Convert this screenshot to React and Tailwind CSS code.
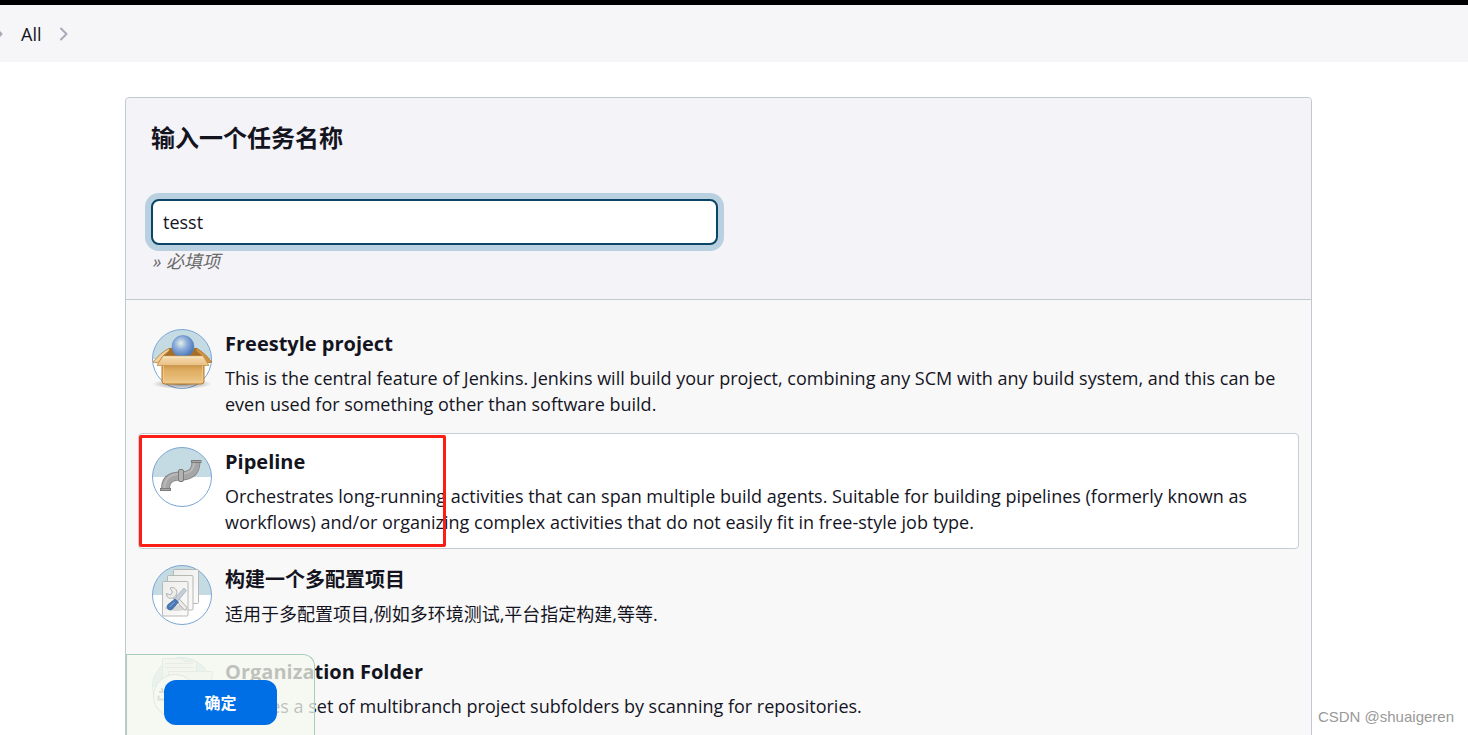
import React, { useState } from 'react';

function BoxIcon() {
  return (
    <svg viewBox="0 0 62 62" className="size-[62px] overflow-visible" aria-hidden="true">
      <defs>
        <radialGradient id="ball" cx="0.4" cy="0.35" r="0.7">
          <stop offset="0" stopColor="#e9f0e4" />
          <stop offset="0.4" stopColor="#8fb0de" />
          <stop offset="1" stopColor="#3f6cb0" />
        </radialGradient>
        <linearGradient id="carton" x1="0" y1="0" x2="0" y2="1">
          <stop offset="0" stopColor="#c08a3c" />
          <stop offset="0.35" stopColor="#dfad62" />
          <stop offset="1" stopColor="#edc88a" />
        </linearGradient>
        <linearGradient id="flap" x1="0" y1="0" x2="0" y2="1">
          <stop offset="0" stopColor="#f6ddb2" />
          <stop offset="1" stopColor="#e9bf82" />
        </linearGradient>
        <radialGradient id="boxShadow">
          <stop offset="0" stopColor="#000" stopOpacity="0.5" />
          <stop offset="1" stopColor="#000" stopOpacity="0" />
        </radialGradient>
      </defs>
      <circle cx="31" cy="31" r="29.5" fill="#fff" />
      <path d="M1.5 31a29.5 29.5 0 0 1 59 0z" fill="#c5dbe4" />
      <circle cx="31" cy="31" r="29.5" fill="none" stroke="#7ba5d4" />
      <ellipse cx="31" cy="56" rx="30" ry="5" fill="url(#boxShadow)" />
      <path d="M18 20h28l8 9H10z" fill="#a56f28" />
      <path d="M19 20C12 23 7 28 2 34l5 1 5-7 6-5z" fill="#efcf9c" stroke="#b37a30" strokeWidth="0.8" />
      <path d="M45 20c6 3 11 8 16 14l-5 1-5-7-6-5z" fill="#cf923f" stroke="#aa6d24" strokeWidth="0.8" />
      <circle cx="32" cy="18.5" r="11" fill="url(#ball)" stroke="#6288bd" strokeWidth="0.6" />
      <path d="M11 35h42v18q0 3-3 3H14q-3 0-3-3z" fill="url(#carton)" stroke="#b67826" />
      <path d="M12.500 37h39v17h-39z" fill="none" stroke="#f0ce94" strokeWidth="0.8" />
      <path d="M12 28h40l6 9.500H6z" fill="url(#flap)" stroke="#c4944f" strokeWidth="0.8" />
      <path d="M12 29h40" stroke="#fbeacb" />
    </svg>
  );
}

function PipeIcon() {
  return (
    <svg viewBox="0 0 62 62" className="size-[62px]" aria-hidden="true">
      <circle cx="31" cy="31" r="29.5" fill="#fff" />
      <path d="M1.5 31a29.5 29.5 0 0 1 59 0z" fill="#c5dbe4" />
      <circle cx="31" cy="31" r="29.5" fill="none" stroke="#7ba5d4" />
      <path d="M14.500 43C14.500 34 19 30.500 28 30H32C41 29 45 25 45 15" fill="none" stroke="#808080" strokeWidth="9" />
      <path d="M14.500 43C14.500 34 19 30.500 28 30H32C41 29 45 25 45 15" fill="none" stroke="#a6a6a6" strokeWidth="7.500" />
      <path d="M13.500 42C13.500 33 18 28.500 28 28H32C39 27 43 24 43.500 16" fill="none" stroke="#b9b9b9" strokeWidth="2" />
      <rect x="27.500" y="23.500" width="5" height="12" rx="1.500" fill="#b2b2b2" stroke="#7c7c7c" />
      <rect x="9.500" y="42.500" width="10" height="2" fill="#a6a6a6" stroke="#7c7c7c" />
      <rect x="40.500" y="14.500" width="9.500" height="2" fill="#a6a6a6" stroke="#7c7c7c" />
    </svg>
  );
}

function PagesIcon() {
  return (
    <svg viewBox="0 0 62 62" className="size-[62px]" aria-hidden="true">
      <defs>
        <linearGradient id="sheet" x1="0" y1="0" x2="1" y2="1">
          <stop offset="0" stopColor="#ededec" />
          <stop offset="1" stopColor="#fbfbfb" />
        </linearGradient>
      </defs>
      <circle cx="31" cy="31" r="29.5" fill="#fff" />
      <path d="M1.5 31a29.5 29.5 0 0 1 59 0z" fill="#c5dbe4" />
      <circle cx="31" cy="31" r="29.5" fill="none" stroke="#7ba5d4" />
      <g fill="url(#sheet)" stroke="#b0b2ae" strokeWidth="0.9">
        <rect x="22.500" y="5.500" width="25" height="34" rx="1" />
        <rect x="16.500" y="11.500" width="25.500" height="34.500" rx="1" />
        <rect x="11.500" y="17.500" width="25.500" height="34.500" rx="1" />
      </g>
      <ellipse cx="25" cy="44" rx="11" ry="3" fill="#d8d9d6" />
      <path d="M22 31l12 13" stroke="#a9aba8" strokeWidth="4.500" strokeLinecap="round" />
      <path d="M22 31l12 13" stroke="#ededec" strokeWidth="3" strokeLinecap="round" />
      <path d="M19 24c4-2 8 2 6.500 6s-6 6-9.500 2.500l-.5-3 4 1.500 2-3z" fill="#ededec" stroke="#a9aba8" strokeWidth="0.9" />
      <path d="M33 24l2.500 2.500L26 38l-3-3z" fill="#c5ced8" stroke="#a1acb8" strokeWidth="0.7" />
      <path d="M24 35l3.500 3-6 7q-2.500 2-4.500 0t0-4.500z" fill="#4a78b6" stroke="#386199" strokeWidth="0.7" />
      <path d="M23.500 38l-5 5" stroke="#8fb3df" />
    </svg>
  );
}

function FolderIcon() {
  return (
    <svg viewBox="0 0 62 62" className="size-[62px]" aria-hidden="true">
      <circle cx="31" cy="31" r="29.5" fill="#fff" />
      <path d="M1.5 31a29.5 29.5 0 0 1 59 0z" fill="#c5dbe4" />
      <circle cx="31" cy="31" r="29.5" fill="none" stroke="#a3c5dd" />
      <g fill="#ececea" stroke="#c2c3c0">
        <path d="M11.500 2.500h19l3 3h12v22h-34z" />
        <path d="M14 7.500h28M14 11.500h28" />
        <path d="M17.500 15.500h44l-2 24h-42z" />
      </g>
      <circle cx="24" cy="40" r="21.5" fill="#f6f7f7" stroke="#a6a8a8" />
      <path d="M7.500 39.500v4h7M11 32v4M8 36h6" fill="none" stroke="#8f9292" strokeWidth="2" />
    </svg>
  );
}

const jobTypes = [
  {
    id: 'freestyle',
    name: 'Freestyle project',
    desc: 'This is the central feature of Jenkins. Jenkins will build your project, combining any SCM with any build system, and this can be even used for something other than software build.',
    icon: BoxIcon,
  },
  {
    id: 'pipeline',
    name: 'Pipeline',
    desc: 'Orchestrates long-running activities that can span multiple build agents. Suitable for building pipelines (formerly known as workflows) and/or organizing complex activities that do not easily fit in free-style job type.',
    icon: PipeIcon,
  },
  {
    id: 'matrix',
    name: '构建一个多配置项目',
    desc: '适用于多配置项目,例如多环境测试,平台指定构建,等等.',
    icon: PagesIcon,
  },
  {
    id: 'org',
    name: 'Organization Folder',
    desc: 'Creates a set of multibranch project subfolders by scanning for repositories.',
    icon: FolderIcon,
  },
];

function Chevron() {
  return (
    <svg viewBox="0 0 10 16" className="h-4 w-[10px] shrink-0" fill="none" stroke="#a9a9b8" strokeWidth="2" aria-hidden="true">
      <path d="M2 2.500l5.500 5.500-5.500 5.500" strokeLinecap="round" strokeLinejoin="round" />
    </svg>
  );
}

export default function App() {
  const [name, setName] = useState('tesst');
  const [selected, setSelected] = useState('pipeline');

  return (
    <div className="relative flex h-screen flex-col overflow-hidden bg-white font-['Open_Sans','Noto_Sans_CJK_SC',sans-serif] text-lg text-[#14141f]">
      <div className="h-[5px] shrink-0 bg-black" />
      <nav className="flex h-[57px] shrink-0 items-center bg-[#f6f6f8]">
        <div className="-ml-1.5 flex items-center">
          <Chevron />
          <a href="#all" className="mr-[18px] ml-[17px] text-lg">All</a>
          <Chevron />
        </div>
      </nav>

      <form className="relative mt-[35px] mr-[156px] ml-[125px] min-h-0 flex-1" onSubmit={(e) => e.preventDefault()}>
        <div className="rounded-t border border-[#c0c9cf] bg-[#f8f8f8]">
          <div className="rounded-t border-b border-[#c0c9cf] bg-[#f3f3f8] px-[25px] pt-[22px] pb-[25px]">
            <label htmlFor="name" className="block text-2xl leading-9 font-bold">输入一个任务名称</label>
            <input
              id="name"
              type="text"
              value={name}
              onChange={(e) => setName(e.target.value)}
              className="mt-[43px] block h-[46px] w-1/2 max-w-[567px] rounded-lg border-2 border-[#0b4566] bg-white px-[10px] text-lg ring-6 ring-[#b8d0e0] outline-none"
            />
            <p className="mt-[3px] ml-0.5 leading-[26px] text-[#6b6b6b] italic">» 必填项</p>
          </div>

          <ul className="flex flex-col gap-0.5 px-3 py-[15px]">
            {jobTypes.map((job) => {
              const Icon = job.icon;
              return (
                <li key={job.id} className="relative">
                  <label
                    className={`flex gap-3 rounded border p-3 ${
                      selected === job.id ? 'border-[#c6cdd2] bg-white' : 'border-transparent'
                    }`}
                  >
                    <input
                      type="radio"
                      name="mode"
                      value={job.id}
                      checked={selected === job.id}
                      onChange={() => setSelected(job.id)}
                      className="sr-only"
                    />
                    <span className="h-[62px] shrink-0">
                      <Icon />
                    </span>
                    <span className="block py-px">
                      <span className="block text-xl leading-[30px] font-bold">{job.name}</span>
                      <span className="mt-1.5 block leading-[26px]">{job.desc}</span>
                    </span>
                  </label>
                  {job.id === 'pipeline' && (
                    <div className="pointer-events-none absolute top-0.5 left-px h-28 w-[307px] rounded-xs border-3 border-[#fa1e14]" />
                  )}
                </li>
              );
            })}
          </ul>
        </div>

        <div className="absolute bottom-0 left-px rounded-tr-xl border-t border-r border-l border-[#a9cdba] bg-[#f5f9f0]/75 pt-[25px] pr-[37px] pb-[10px] pl-[37px]">
          <button type="submit" className="block h-[45px] w-[113px] rounded-xl bg-[#006fe6] text-base font-bold text-white">
            确定
          </button>
        </div>
      </form>

      <div className="absolute right-3.5 bottom-1.5 font-['Liberation_Sans',sans-serif] text-[15px] leading-6 text-[#999]">CSDN @shuaigeren</div>
    </div>
  );
}
